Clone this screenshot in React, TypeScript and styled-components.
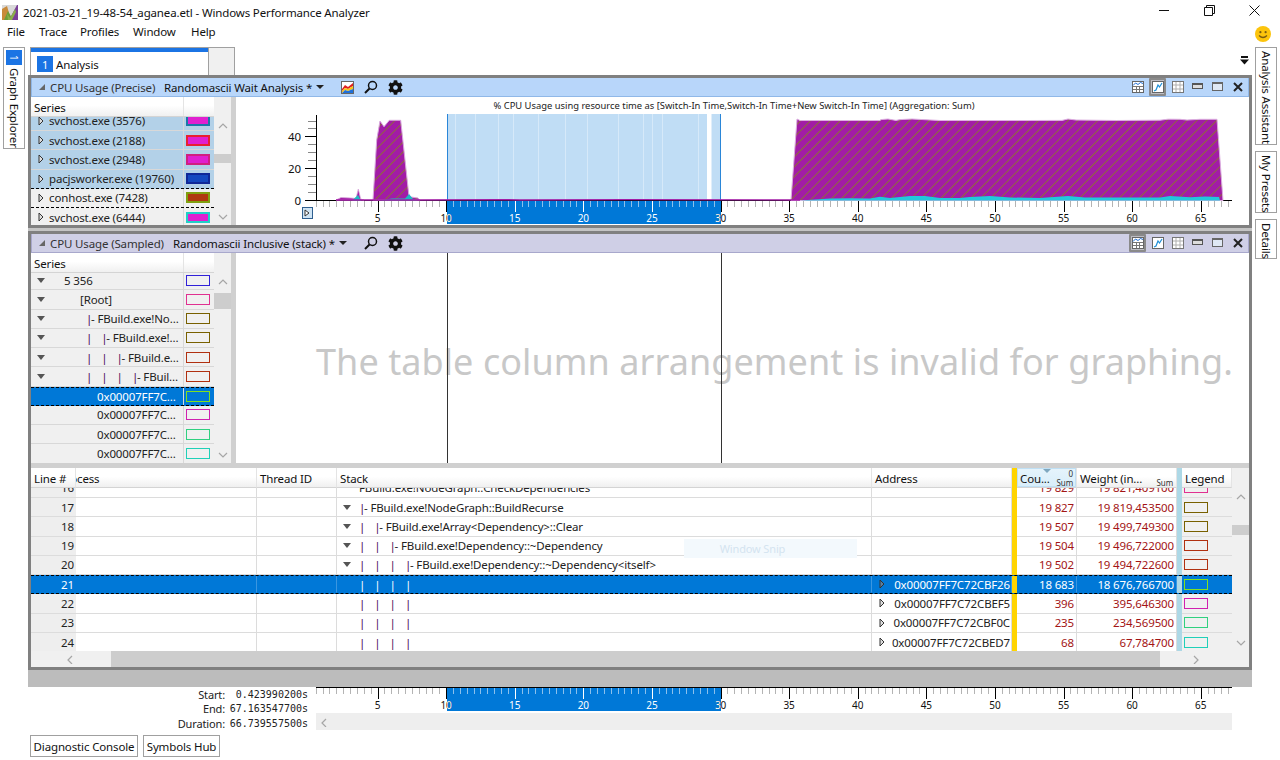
import React from 'react';
import styled, { createGlobalStyle } from 'styled-components';
import { FaCog } from 'react-icons/fa';

const FONT = `"Noto Sans", "Open Sans", "Liberation Sans", sans-serif`;

const Global = createGlobalStyle`
  html, body { margin: 0; padding: 0; background: #fff; }
  body { font-family: ${FONT}; font-size: 11.5px; letter-spacing: -0.14px; color: #111; }
  * { box-sizing: border-box; }
`;

const Page = styled.div`
  width: 1280px; height: 760px; overflow: hidden; display: flex; flex-direction: column; background: #fff;
`;
const TitleBar = styled.div`
  height: 24px; display: flex; align-items: center; padding-left: 2px; flex: none;
`;
const TitleText = styled.span`
  margin-left: 5px; white-space: nowrap;
`;
const WinControls = styled.div`
  margin-left: auto; display: flex; height: 100%; padding-right: 3px;
`;
const WinButton = styled.div`
  width: 45px; display: flex; align-items: center; justify-content: center; padding-bottom: 4px;
`;
const MenuBar = styled.div`
  height: 19px; display: flex; align-items: center; padding: 0 0 5px 7px; flex: none;
`;
const MenuItem = styled.span<{ $w: number }>`
  width: ${p => p.$w}px; flex: none;
`;
const Smiley = styled.svg`
  margin-left: auto; margin-right: 9px; margin-top: 5px; width: 16px; height: 16px;
`;
const Workspace = styled.div`
  flex: 1; display: flex; min-height: 0;
`;
const LeftRail = styled.div`
  width: 28px; flex: none; padding: 4px 0 0 3px;
`;
const RightRail = styled.div`
  width: 28px; flex: none; padding: 4px 0 0 3px; display: flex; flex-direction: column; gap: 6px;
`;
const SideTab = styled.div<{ $h: number }>`
  width: 22px; height: ${p => p.$h}px; border: 1px solid #a0a0a0; background: #fff; writing-mode: vertical-rl;
  display: flex; align-items: center; padding-top: 3px; white-space: nowrap; line-height: 20px;
`;
const GraphTab = styled(SideTab)`
  padding-top: 2px; gap: 3px;
`;
const TabBadge = styled.span`
  width: 16px; height: 16px; background: #1b74e4; color: #fff; font-size: 10px; display: flex; align-items: center; justify-content: center; line-height: 1;
`;
const Center = styled.div`
  width: 1224px; flex: none; display: flex; flex-direction: column;
`;
const TabStrip = styled.div`
  height: 32px; flex: none; display: flex; padding: 4px 0 0 2px; align-items: stretch;
`;
const Tab = styled.div`
  width: 179px; border: 1px solid #a0a0a0; border-bottom: none; background: #fff;
  display: flex; align-items: center; gap: 3px; padding: 5px 0 0 6px; box-shadow: inset 0 4px 0 #1b74e4;
`;
const TabNum = styled.span`
  width: 16px; height: 16px; background: #1b74e4; color: #fff; font-size: 11px; display: flex; align-items: center; justify-content: center;
`;
const TabFiller = styled.div`
  width: 26px; border: 1px solid #a0a0a0; border-left: none; border-bottom: none; background: #f0f0f0;
`;
const StripArrow = styled.svg`
  margin: 9px 3px 0 auto; width: 9px; height: 9px;
`;
const Frame = styled.div<{ $h: number }>`
  height: ${p => p.$h}px; flex: none; border: 3px solid #808080; display: flex; flex-direction: column; background: #fff;
`;
const FrameGap = styled.div`
  height: 3px; background: #c4c4c4; flex: none;
`;
const Header = styled.div<{ $bg: string; $line: string }>`
  height: 19px; flex: none; background: ${p => p.$bg}; border-bottom: 1px solid ${p => p.$line}; border-left: 1px solid ${p => p.$line};
  border-right: 1px solid ${p => p.$line}; display: flex; align-items: center; padding: 0 0 0 7px;
`;
const HeaderTitle = styled.span<{ $w: number }>`
  margin-left: 5px; width: ${p => p.$w}px; flex: none; color: #333; white-space: nowrap;
`;
const PresetName = styled.span<{ $w: number }>`
  width: ${p => p.$w}px; flex: none; white-space: nowrap; display: flex; align-items: center; gap: 4px;
`;
const Caret = styled.span`
  width: 0; height: 0; border-left: 4px solid transparent; border-right: 4px solid transparent; border-top: 4px solid #222; flex: none;
`;
const Collapse = styled.span`
  width: 0; height: 0; border-bottom: 6px solid #666; border-left: 6px solid transparent; flex: none;
`;
const IconSlot = styled.span<{ $w?: number }>`
  width: ${p => p.$w ?? 24}px; height: 18px; display: flex; align-items: center; justify-content: center; flex: none;
`;
const RightIcons = styled.div`
  margin-left: auto; display: flex; align-items: center;
`;
const ToolBtn = styled.span<{ $on?: boolean }>`
  width: 20px; height: 18px; display: flex; align-items: center; justify-content: center; position: relative;
  ${p => p.$on ? `&::before { content: ''; position: absolute; left: 1px; right: 2px; top: 0; bottom: 0; background: #bdbdc4; border: 2px solid #8a8a8a; border-radius: 1px; }` : ''}
  & > svg { position: relative; }
`;
const Body = styled.div`
  flex: 1; display: flex; min-height: 0;
`;
const GraphBody = styled.div`
  height: 210px; flex: none; display: flex;
`;
const SeriesPane = styled.div`
  width: 200px; flex: none; display: flex; background: #f0f0f0; overflow: hidden;
`;
const SeriesMain = styled.div`
  width: 183px; flex: none; display: flex; flex-direction: column; overflow: hidden;
`;
const ColHead = styled.div`
  height: 20px; flex: none; display: flex; background: linear-gradient(#fff, #fff 45%, #f0f0f0); border-bottom: 1px solid #d4d4d4; position: relative; z-index: 1;
`;
const SeriesHeadName = styled.div`
  width: 153px; padding: 2px 0 0 3px; border-right: 1px solid #e4e4e4; line-height: 18px;
`;
const SeriesList = styled.div<{ $offset: number }>`
  margin-top: ${p => p.$offset}px; display: flex; flex-direction: column;
`;
const SeriesRow = styled.div<{ $state?: 'plain' | 'soft' | 'sel'; $dash?: boolean }>`
  height: 19.27px; flex: none; display: flex; align-items: center; border-bottom: 1px ${p => p.$dash || p.$state === 'sel' ? 'dashed #000' : 'solid #d8d8d8'};
  background: ${p => p.$state === 'soft' ? '#b3d1e8' : p.$state === 'sel' ? '#0078d7' : '#f0f0f0'};
  color: ${p => p.$state === 'sel' ? '#fff' : '#222'};
  ${p => p.$state === 'sel' ? 'border-top:1px dashed #000;' : ''}
`;
const RowName = styled.div<{ $pad?: number }>`
  width: 153px; flex: none; height: 100%; display: flex; align-items: center; padding-left: ${p => p.$pad ?? 0}px; padding-right: 2px; border-right: 1px solid #d8d8d8; white-space: nowrap; overflow: hidden; min-width: 0;
`;
const Clip = styled.span`
  overflow: hidden; text-overflow: ellipsis; white-space: pre; min-width: 0; flex: 1;
`;
const Gap = styled.span<{ $w: number }>`
  width: ${p => p.$w}px; flex: none;
`;
const SwatchCell = styled.div`
  width: 30px; display: flex; align-items: center; padding-left: 2px; flex: none;
`;
const Swatch = styled.span<{ $c: string; $fill?: string }>`
  display: block; width: 24px; height: 11px; border: ${p => p.$fill ? 2 : 1}px solid ${p => p.$c}; background: ${p => p.$fill ?? 'transparent'};
`;
const Track = styled.div`
  width: 17px; flex: none; background: #f0f0f0; display: flex; flex-direction: column; align-items: center; padding: 24px 0 3px;
`;
const Thumb = styled.div<{ $top: number; $h: number }>`
  width: 100%; height: ${p => p.$h}px; background: #cdcdcd; margin-top: ${p => p.$top}px; flex: none;
`;
const ChevBottom = styled.span`
  margin-top: auto; display: flex;
`;
const PaneDivider = styled.div`
  width: 5px; flex: none; background: #d0d0d0;
`;
const GraphArea = styled.div`
  flex: 1; position: relative; min-width: 0; overflow: hidden;
`;
const ChartSvg = styled.svg`
  display: block;
`;
const VLine = styled.div<{ $x: number }>`
  position: absolute; top: 0; bottom: 0; left: ${p => p.$x}px; width: 1px; background: #333;
`;
const InvalidText = styled.div`
  height: 100%; padding: 87px 0 0 80px; font-size: 36px; color: #c8c8c8; white-space: nowrap; letter-spacing: 0.07px; line-height: 44px;
`;
const HDivider = styled.div`
  height: 5px; flex: none; background: #d0d0d0;
`;
const TableWrap = styled.div`
  flex: 1; display: flex; flex-direction: column; min-height: 0; position: relative;
`;
const TableTop = styled.div`
  flex: 1; display: flex; min-height: 0;
`;
const TableMain = styled.div`
  width: 1201px; flex: none; display: flex; flex-direction: column; overflow: hidden; position: relative;
`;
const GRID = '45px 181px 80px 535px 140px 5px 60px 100px 5px 50px';
const THead = styled.div`
  height: 20px; flex: none; display: grid; grid-template-columns: ${GRID}; position: relative; z-index: 2; background: #fff;
`;
const Th = styled.div<{ $active?: boolean }>`
  background: ${p => p.$active ? 'linear-gradient(#e6f4fc,#d8eefa)' : 'linear-gradient(#fff, #fff 45%, #f0f0f0)'}; border-bottom: 1px solid #d4d4d4; border-right: 1px solid #e4e4e4;
  padding: 2px 0 0 3px; line-height: 18px; overflow: hidden; white-space: nowrap; position: relative;
  ${p => p.$active ? 'box-shadow: inset 0 0 0 1px #bfe0f5;' : ''}
`;
const ThCut = styled.span`
  display: block; margin-left: -20px;
`;
const ThSmall = styled.span`
  position: absolute; right: 3px; bottom: 0; font-size: 8px; line-height: 9px; color: #333;
`;
const ThZero = styled.span`
  position: absolute; right: 3px; top: 1px; font-size: 8px; line-height: 9px; color: #333;
`;
const SortMark = styled.span`
  position: absolute; left: 26px; top: 1px; width: 0; height: 0; border-left: 4px solid transparent; border-right: 4px solid transparent; border-top: 4px solid #7fa8c0;
`;
const Bar = styled.div<{ $c: string }>`
  background: ${p => p.$c};
`;
const TBody = styled.div`
  margin-top: -9.25px; display: flex; flex-direction: column;
`;
const TRow = styled.div<{ $sel?: boolean }>`
  height: 19.27px; flex: none; display: grid; grid-template-columns: ${GRID};
  background: ${p => p.$sel ? '#0078d7' : '#fff'}; color: ${p => p.$sel ? '#fff' : '#222'};
  ${p => p.$sel ? 'border-top: 1px dashed #000; border-bottom: 1px dashed #000;' : ''}
`;
const Td = styled.div<{ $sel?: boolean }>`
  border-right: 1px solid ${p => p.$sel ? '#3a96e0' : '#dcdcdc'}; border-bottom: 1px solid ${p => p.$sel ? 'transparent' : '#dcdcdc'};
  display: flex; align-items: center; overflow: hidden; white-space: nowrap; min-width: 0;
`;
const LineTd = styled(Td)`
  justify-content: flex-end; padding-right: 2px; background: ${p => p.$sel ? '#0078d7' : '#eee'}; border-right: none;
`;
const StackTd = styled(Td)`
  padding-left: 6px;
`;
const AddrTd = styled(Td)`
  padding: 0 1px 0 7px; justify-content: space-between;
`;
const NumTd = styled(Td)<{ $sel?: boolean }>`
  justify-content: flex-end; padding-right: 2px; color: ${p => p.$sel ? '#fff' : '#a31515'};
`;
const LegendTd = styled(Td)`
  padding-left: 2px; background: ${p => p.$sel ? '#0078d7' : '#f0f0f0'}; border-right: none;
`;
const ExpandSlot = styled.span`
  width: 16px; flex: none; display: flex;
`;
const Down = styled.span`
  width: 0; height: 0; border-left: 4.5px solid transparent; border-right: 4.5px solid transparent; border-top: 5px solid #555; flex: none;
`;
const Pipe = styled.span<{ $w?: number; $sel?: boolean }>`
  display: inline-block; width: ${p => p.$w ?? 15.3}px; flex: none; color: ${p => p.$sel ? '#fff' : '#4a0a5a'};
`;
const HScroll = styled.div`
  height: 16px; flex: none; display: flex; background: #f0f0f0; align-items: center;
`;
const HArrowCell = styled.div<{ $w: number }>`
  width: ${p => p.$w}px; flex: none; display: flex; justify-content: center; align-items: center; height: 100%;
`;
const HThumb = styled.div`
  width: 1049px; height: 100%; background: #cdcdcd; flex: none;
`;
const Snip = styled.div`
  position: absolute; left: 653px; top: 71px; width: 173px; height: 19px; background: #f3f9fd; color: #d4e4f0; font-size: 11px; text-align: center; line-height: 19px; padding-right: 36px; z-index: 1;
`;
const Strip = styled.div`
  height: 17px; flex: none; background: #bcbcbc;
`;
const Timeline = styled.div`
  display: grid; grid-template-columns: 288px 916px; height: 46px; flex: none;
`;
const TimeLabels = styled.div`
  display: grid; grid-template-columns: 197px 83px; grid-auto-rows: 14.6px; align-items: center;
`;
const TimeKey = styled.span`
  text-align: right; font-size: 11px; color: #222;
`;
const TimeVal = styled.span`
  font-family: "DejaVu Sans Mono", monospace; font-size: 10px; color: #222; text-align: right; letter-spacing: 0;
`;
const RulerCol = styled.div`
  display: flex; flex-direction: column;
`;
const RulerScroll = styled.div`
  height: 17px; margin-top: 1px; background: #eee; display: flex; align-items: center; padding-left: 4px;
`;
const Footer = styled.div`
  display: flex; gap: 5px; padding: 2px 0 0 2px;
`;
const FootBtn = styled.div<{ $w: number }>`
  width: ${p => p.$w}px; height: 22px; border: 1px solid #a0a0a0; display: flex; align-items: center; justify-content: center; white-space: nowrap;
`;

/* ---------- icons ---------- */
const Hollow = ({ light }: { light?: boolean }) => (
  <svg width="6" height="10" viewBox="0 0 6 10"><path d="M1 1 L5 5 L1 9 Z" fill={light ? '#5a7fa0' : '#ddd'} stroke="#333" strokeWidth="1" /></svg>
);
const Chev = ({ d = 'up' }: { d?: 'up' | 'down' | 'left' | 'right' }) => {
  const p = { up: 'M1 6 L5 2 L9 6', down: 'M1 2 L5 6 L9 2', left: 'M6 1 L2 5 L6 9', right: 'M3 1 L7 5 L3 9' }[d];
  return <svg width="10" height="10" viewBox="0 0 10 8" style={{ display: 'block' }}><path d={p} fill="none" stroke="#a6a6a6" strokeWidth="1.2" /></svg>;
};
const Logo = () => (
  <svg width="16" height="15" viewBox="0 0 16 15">
    <rect width="16" height="15" fill="#d9d9d9" />
    <polygon points="0,15 0,4 5,1 9,15" fill="#c98a3a" />
    <polygon points="2,15 6,6 11,15" fill="#6f9d3a" />
    <polygon points="7,15 15,0 16,0 16,15" fill="#7a3f98" />
    <polygon points="5,9 8,13 13,4 14,7 10,15 6,15" fill="#8bb04a" />
  </svg>
);
const Magnifier = () => (
  <svg width="14" height="14" viewBox="0 0 14 14"><circle cx="8.5" cy="5.5" r="4" fill="none" stroke="#111" strokeWidth="1.5" /><path d="M5.5 8.5 L1 13" stroke="#111" strokeWidth="2" /></svg>
);
const ColorChart = () => (
  <svg width="13" height="13" viewBox="0 0 13 13">
    <rect x=".5" y=".5" width="12" height="12" fill="#fff" stroke="#666" />
    <path d="M1 8 L4 4 L7 6 L12 2 V5 L7 8 L4 7 L1 10 Z" fill="#e02020" />
    <path d="M1 10 L4 7 L7 8 L12 5 V8 L7 10 L4 9 L1 12 Z" fill="#f5c518" />
    <path d="M1 12 L4 9 L7 10 L12 8 V12 H1 Z" fill="#1f6fd8" />
  </svg>
);
const ComboIcon = () => (
  <svg width="12" height="12" viewBox="0 0 12 12"><rect x=".5" y=".5" width="11" height="11" fill="#fff" stroke="#666" /><path d="M1 5.5H11M1 8.5H11M4.5 5V11M7.5 5V11" stroke="#777" /><path d="M1 4.5 L3.5 2 L6 3.5 L8.5 1.5 L11 2.5" fill="none" stroke="#1f6fd8" /></svg>
);
const LineIcon = () => (
  <svg width="12" height="12" viewBox="0 0 12 12"><rect x=".5" y=".5" width="11" height="11" fill="#fff" stroke="#666" /><path d="M2 10 L4 9 L6 4 L7.5 6 L10 2" fill="none" stroke="#1f8fd8" strokeWidth="1.2" /></svg>
);
const TableIcon = () => (
  <svg width="12" height="12" viewBox="0 0 12 12"><rect x=".5" y=".5" width="11" height="11" fill="#fff" stroke="#777" /><path d="M1 4H11M1 8H11M4 1V11M8 1V11" stroke="#b0b0b0" /></svg>
);
const MinBtn = () => (
  <svg width="12" height="8" viewBox="0 0 12 8"><rect x=".5" y=".5" width="10" height="5" fill="#ddd" stroke="#555" /><rect x="0" y="0" width="11" height="2" fill="#555" /></svg>
);
const MaxBtn = () => (
  <svg width="12" height="10" viewBox="0 0 12 10"><rect x=".5" y=".5" width="10" height="8" fill="#dfe8f4" stroke="#666" /><rect x="0" y="0" width="11" height="2" fill="#666" /></svg>
);
const CloseBtn = () => (
  <svg width="10" height="10" viewBox="0 0 10 10"><path d="M1 1 L9 9 M9 1 L1 9" stroke="#222" strokeWidth="2" /></svg>
);
const RightTools = ({ active }: { active: number }) => (
  <RightIcons>
    <ToolBtn $on={active === 0}><ComboIcon /></ToolBtn>
    <ToolBtn $on={active === 1}><LineIcon /></ToolBtn>
    <ToolBtn $on={active === 2}><TableIcon /></ToolBtn>
    <ToolBtn><MinBtn /></ToolBtn>
    <ToolBtn><MaxBtn /></ToolBtn>
    <ToolBtn><CloseBtn /></ToolBtn>
  </RightIcons>
);

/* ---------- chart ---------- */
const X = (t: number) => 377.5 + (t - 5) * 13.72;

const Ruler = ({ top, id }: { top: number; id: string }) => {
  const sx0 = 447, sx1 = 721;
  const ticks: React.ReactNode[] = [];
  for (let i = 1; i <= 134; i++) {
    const t = i / 2;
    const x = Math.round(X(t)) + 0.5;
    if (i % 10 === 0) continue;
    const inside = x > sx0 && x < sx1;
    ticks.push(<line key={i} x1={x} x2={x} y1={top + 1} y2={top + 7} stroke={inside ? '#8cc0ec' : '#b4b4b4'} />);
  }
  const labels = [5, 10, 15, 20, 25, 30, 35, 40, 45, 50, 55, 60, 65];
  const white = labels.filter(l => l >= 10 && l <= 30);
  const black = labels.filter(l => l <= 10 || l >= 30);
  return (
    <g fontFamily={FONT} fontSize="10" textAnchor="middle">
      <clipPath id={id}><rect x={sx0} y={top} width={sx1 - sx0} height={24} /></clipPath>
      <rect x={sx0} y={top + 1} width={sx1 - sx0} height={23} fill="#0078d7" />
      <line x1={316} x2={1232} y1={top + 0.5} y2={top + 0.5} stroke="#000" />
      {ticks}
      {labels.map(l => {
        const x = Math.round(X(l)) + 0.5;
        const inside = l > 10 && l < 30;
        return <line key={l} x1={x} x2={x} y1={top + 1} y2={top + 12} stroke={inside ? '#fff' : '#000'} />;
      })}
      {black.map(l => <text key={l} x={X(l)} y={top + 22} fill="#111">{l}</text>)}
      <g clipPath={`url(#${id})`}>
        {white.map(l => <text key={l} x={X(l)} y={top + 22} fill="#fff">{l}</text>)}
      </g>
    </g>
  );
};

const bigTop = 'M791 200 L797 119 L800 120.5 L830 120.5 L880 120.5 L881 119.6 L888 119 L896 120.4 L900 119.6 L912 119 L925 119.7 L940 120.5 L1030 120.5 L1062 120.4 L1068 119 L1076 120 L1116 120.5 L1160 120.2 L1168 119.2 L1180 119.3 L1187 120 L1200 119.3 L1217 119.3 L1223 200.5 L791 200.5 Z';
const peak = 'M373 200 L376.7 140 L380 121 L384 126.7 L389.3 120.3 L400.7 120.3 L409 196.7 L418 198 L420 200 Z';
const smallHump = 'M336 200 L341 197.5 L351 198 L356 198.5 L358.3 189 L360.7 199 L364 200 Z';
const teal = 'M800 200.5 L830 198.6 L850 198.2 L870 198.6 L880 196.8 L890 198 L910 196 L925 196 L940 198 L960 198 L970 197 L990 196 L1010 197.5 L1040 198 L1068 196 L1085 197.5 L1115 197.5 L1135 197.5 L1160 197.5 L1170 196 L1190 197.2 L1205 196.4 L1219 197 L1220 200.5 Z';
const bands = [455, 475, 498, 513, 538, 565, 587, 618, 643, 652, 662, 698];

const PreciseChart = () => (
  <ChartSvg width="1013" height="127" viewBox="236 97 1013 127">
    <defs>
      <pattern id="hatch" width="7" height="7" patternUnits="userSpaceOnUse" patternTransform="rotate(45)">
        <rect width="7" height="7" fill="#a21ca6" />
        <line x1="0.5" x2="0.5" y1="0" y2="7" stroke="#8f6a3c" strokeWidth="1" />
      </pattern>
    </defs>
    <text x="734" y="108.5" fontFamily={FONT} fontSize="9.4" letterSpacing="0" textAnchor="middle" fill="#222">% CPU Usage using resource time as [Switch-In Time,Switch-In Time+New Switch-In Time] (Aggregation: Sum)</text>
    <rect x="447" y="114" width="274" height="86" fill="#c0ddf5" />
    {bands.map(b => <rect key={b} x={b} y="114" width="1" height="86" fill="#d6e9f9" />)}
    <rect x="707" y="114" width="4.5" height="86" fill="#fff" />
    <rect x="447" y="114" width="1" height="86" fill="#2a86d8" />
    <rect x="720" y="114" width="1" height="86" fill="#2a86d8" />
    <Ruler top={200} id="clip-a" />
    <path d={smallHump} fill="#a21ca6" stroke="#d8a8dc" strokeWidth="0.8" />
    <path d={peak} fill="url(#hatch)" stroke="#d8a8dc" strokeWidth="1" />
    <path d={bigTop} fill="url(#hatch)" stroke="#dcaee0" strokeWidth="1" />
    <path d="M380 200.5 L392 198.5 L405 198.5 L409 194 L413 199 L418 200.5 Z M352 200.5 L358 195 L361 200.5 Z" fill="#1fb8c4" />
    <path d={teal} fill="#22c8dc" />
    <path d="M336 200 L420 200 L500 199.6 L520 200 L630 199.6 L800 200" fill="none" stroke="#a21ca6" strokeWidth="1.4" />
    <line x1="316.5" x2="316.5" y1="115" y2="200" stroke="#000" />
    {[5, 10, 15, 25, 30, 35, 45, 50].map(v => <line key={v} x1="308" x2="316" y1={Math.round(200 - v * 1.59) + 0.5} y2={Math.round(200 - v * 1.59) + 0.5} stroke="#888" />)}
    {[20, 40].map(v => <line key={v} x1="305" x2="316" y1={Math.round(200 - v * 1.59) + 0.5} y2={Math.round(200 - v * 1.59) + 0.5} stroke="#000" />)}
    <line x1="305" x2="316" y1="200.5" y2="200.5" stroke="#000" />
    <g fontFamily={FONT} fontSize="11.5" textAnchor="end" fill="#111">
      <text x="301" y="141">40</text>
      <text x="301" y="173">20</text>
      <text x="301" y="205">0</text>
    </g>
    <g>
      <rect x="302.5" y="207.5" width="10" height="11" fill="#cfe4f4" stroke="#2f5f8f" />
      <path d="M305 210 L309 213 L305 216 Z" fill="#fff" stroke="#333" />
    </g>
  </ChartSvg>
);

const series1: { n: string; c: string; f: string; s?: 'soft'; d?: boolean }[] = [
  { n: 'svchost.exe (3576)', c: '#1a78a8', f: '#e020d0', s: 'soft' },
  { n: 'svchost.exe (2188)', c: '#e82030', f: '#e020d0', s: 'soft' },
  { n: 'svchost.exe (2948)', c: '#d02080', f: '#e020d0', s: 'soft' },
  { n: 'pacjsworker.exe (19760)', c: '#102898', f: '#1548c0', s: 'soft', d: true },
  { n: 'conhost.exe (7428)', c: '#80a010', f: '#b03810', d: true },
  { n: 'svchost.exe (6444)', c: '#20d0c8', f: '#e020d0' },
];

const series2: { pad: number; pipes: number; last: string; c: string; tri: boolean; sel?: boolean }[] = [
  { pad: 34, pipes: 0, last: '5 356', c: '#3020d8', tri: true },
  { pad: 50, pipes: 0, last: '[Root]', c: '#e03090', tri: true },
  { pad: 56, pipes: 0, last: '|- FBuild.exe!NodeGraph::BuildRecurse', c: '#786000', tri: true },
  { pad: 56, pipes: 1, last: '|- FBuild.exe!Array<Dependency>::Clear', c: '#786000', tri: true },
  { pad: 56, pipes: 2, last: '|- FBuild.exe!Dependency::~Dependency', c: '#b03010', tri: true },
  { pad: 56, pipes: 3, last: '|- FBuild.exe!Dependency::~Dependency<itself>', c: '#b03010', tri: true },
  { pad: 66, pipes: 0, last: '0x00007FF7C72CBF26', c: '#80e020', tri: false, sel: true },
  { pad: 66, pipes: 0, last: '0x00007FF7C72CBEF5', c: '#d020b0', tri: false },
  { pad: 66, pipes: 0, last: '0x00007FF7C72CBF0C', c: '#30d080', tri: false },
  { pad: 66, pipes: 0, last: '0x00007FF7C72CBED7', c: '#20d0b8', tri: false },
];

const rows: { l: number; pipes: number; text: string; tri: boolean; addr: string; cnt: string; w: string; c: string; sel?: boolean }[] = [
  { l: 16, pipes: 0, text: 'FBuild.exe!NodeGraph::CheckDependencies', tri: false, addr: '', cnt: '19 829', w: '19 821,409100', c: '#e03090' },
  { l: 17, pipes: 0, text: '|- FBuild.exe!NodeGraph::BuildRecurse', tri: true, addr: '', cnt: '19 827', w: '19 819,453500', c: '#786000' },
  { l: 18, pipes: 1, text: '|- FBuild.exe!Array<Dependency>::Clear', tri: true, addr: '', cnt: '19 507', w: '19 499,749300', c: '#786000' },
  { l: 19, pipes: 2, text: '|- FBuild.exe!Dependency::~Dependency', tri: true, addr: '', cnt: '19 504', w: '19 496,722000', c: '#b03010' },
  { l: 20, pipes: 3, text: '|- FBuild.exe!Dependency::~Dependency<itself>', tri: true, addr: '', cnt: '19 502', w: '19 494,722600', c: '#b03010' },
  { l: 21, pipes: 4, text: '', tri: false, addr: '0x00007FF7C72CBF26', cnt: '18 683', w: '18 676,766700', c: '#80e020', sel: true },
  { l: 22, pipes: 4, text: '', tri: false, addr: '0x00007FF7C72CBEF5', cnt: '396', w: '395,646300', c: '#d020b0' },
  { l: 23, pipes: 4, text: '', tri: false, addr: '0x00007FF7C72CBF0C', cnt: '235', w: '234,569500', c: '#30d080' },
  { l: 24, pipes: 4, text: '', tri: false, addr: '0x00007FF7C72CBED7', cnt: '68', w: '67,784700', c: '#20d0b8' },
];

const PipedText = ({ pipes, text, sel }: { pipes: number; text: string; sel?: boolean }) => {
  const match = text.startsWith('|-');
  return (
    <>
      {Array.from({ length: pipes }).map((_, i) => <Pipe key={i} $sel={sel}>|</Pipe>)}
      {match ? <><Pipe $w={5} $sel={sel}>|</Pipe>{text.slice(1)}</> : text}
    </>
  );
};

const SeriesScroll = ({ top, h }: { top: number; h: number }) => (
  <Track>
    <Chev d="up" />
    <Thumb $top={top} $h={h} />
    <ChevBottom><Chev d="down" /></ChevBottom>
  </Track>
);

export default function App() {
  return (
    <Page>
      <Global />
      <TitleBar>
        <Logo />
        <TitleText>2021-03-21_19-48-54_aganea.etl - Windows Performance Analyzer</TitleText>
        <WinControls>
          <WinButton><svg width="11" height="11" viewBox="0 0 11 11"><path d="M0 5.5H10" stroke="#111" /></svg></WinButton>
          <WinButton><svg width="11" height="11" viewBox="0 0 11 11"><path d="M2.5 2.5V.5H10.5V8.5H8.5M.5 2.5H8.5V10.5H.5Z" fill="none" stroke="#111" /></svg></WinButton>
          <WinButton><svg width="11" height="11" viewBox="0 0 11 11"><path d="M.5 .5L10.5 10.5M10.5 .5L.5 10.5" stroke="#111" /></svg></WinButton>
        </WinControls>
      </TitleBar>
      <MenuBar>
        <MenuItem $w={32}>File</MenuItem>
        <MenuItem $w={41}>Trace</MenuItem>
        <MenuItem $w={53}>Profiles</MenuItem>
        <MenuItem $w={58}>Window</MenuItem>
        <MenuItem $w={30}>Help</MenuItem>
        <Smiley viewBox="0 0 16 16">
          <circle cx="8" cy="8" r="8" fill="#fcc40c" />
          <circle cx="5.4" cy="6.2" r="1.1" fill="#7a5c10" /><circle cx="10.6" cy="6.2" r="1.1" fill="#7a5c10" />
          <path d="M4 9.5 Q8 13.5 12 9.5" fill="none" stroke="#7a5c10" strokeWidth="1.2" />
        </Smiley>
      </MenuBar>
      <Workspace>
        <LeftRail>
          <GraphTab $h={102}><TabBadge>1</TabBadge>Graph Explorer</GraphTab>
        </LeftRail>
        <Center>
          <TabStrip>
            <Tab><TabNum>1</TabNum>Analysis</Tab>
            <TabFiller />
            <StripArrow viewBox="0 0 9 9"><rect x="1" width="7" height="2" fill="#111" /><path d="M0 3.5H9L4.5 8.5Z" fill="#111" /></StripArrow>
          </TabStrip>
          <Frame $h={153}>
            <Header $bg="#b8d6fa" $line="#90b8e8">
              <Collapse />
              <HeaderTitle $w={114}>CPU Usage (Precise)</HeaderTitle>
              <PresetName $w={172}>Randomascii Wait Analysis *<Caret /></PresetName>
              <IconSlot $w={22}><ColorChart /></IconSlot>
              <IconSlot $w={26}><Magnifier /></IconSlot>
              <IconSlot $w={22}><FaCog size={15} color="#111" /></IconSlot>
              <RightTools active={1} />
            </Header>
            <Body>
              <SeriesPane>
                <SeriesMain>
                  <ColHead><SeriesHeadName>Series</SeriesHeadName></ColHead>
                  <SeriesList $offset={-5.3}>
                    {series1.map(s => (
                      <SeriesRow key={s.n} $state={s.s} $dash={s.d}>
                        <RowName $pad={7}>
                          <Hollow /><Gap $w={5} />
                          <Clip>{s.n}</Clip>
                        </RowName>
                        <SwatchCell><Swatch $c={s.c} $fill={s.f} /></SwatchCell>
                      </SeriesRow>
                    ))}
                  </SeriesList>
                </SeriesMain>
                <SeriesScroll top={23} h={9} />
              </SeriesPane>
              <PaneDivider />
              <GraphArea><PreciseChart /></GraphArea>
            </Body>
          </Frame>
          <FrameGap />
          <Frame $h={439}>
            <Header $bg="#cfcfe6" $line="#a8a8cc">
              <Collapse />
              <HeaderTitle $w={123}>CPU Usage (Sampled)</HeaderTitle>
              <PresetName $w={185}>Randomascii Inclusive (stack) *<Caret /></PresetName>
              <IconSlot $w={26}><Magnifier /></IconSlot>
              <IconSlot $w={22}><FaCog size={15} color="#111" /></IconSlot>
              <RightTools active={0} />
            </Header>
            <GraphBody>
              <SeriesPane>
                <SeriesMain>
                  <ColHead><SeriesHeadName>Series</SeriesHeadName></ColHead>
                  <SeriesList $offset={-2}>
                    {series2.map(s => (
                      <SeriesRow key={s.c + s.pad + s.last} $state={s.sel ? 'sel' : 'plain'}>
                        <RowName $pad={s.tri ? 6 : s.pad}>
                          {s.tri && <><Down /><Gap $w={s.pad - 15} /></>}
                          <Clip><PipedText pipes={s.pipes} text={s.last} /></Clip>
                        </RowName>
                        <SwatchCell><Swatch $c={s.c} /></SwatchCell>
                      </SeriesRow>
                    ))}
                  </SeriesList>
                </SeriesMain>
                <SeriesScroll top={6} h={16} />
              </SeriesPane>
              <PaneDivider />
              <GraphArea>
                <InvalidText>The table column arrangement is invalid for graphing.</InvalidText>
                <VLine $x={211} />
                <VLine $x={485} />
              </GraphArea>
            </GraphBody>
            <HDivider />
            <TableWrap>
              <TableTop>
                <TableMain>
                  <THead>
                    <Th>Line #</Th>
                    <Th><ThCut>Process</ThCut></Th>
                    <Th>Thread ID</Th>
                    <Th>Stack</Th>
                    <Th>Address</Th>
                    <Bar $c="#ffd400" />
                    <Th $active>Cou...<SortMark /><ThZero>0</ThZero><ThSmall>Sum</ThSmall></Th>
                    <Th>Weight (in...<ThSmall>Sum</ThSmall></Th>
                    <Bar $c="#add8e6" />
                    <Th>Legend</Th>
                  </THead>
                  <TBody>
                    {rows.map(r => (
                      <TRow key={r.l} $sel={r.sel}>
                        <LineTd $sel={r.sel}>{r.l}</LineTd>
                        <Td $sel={r.sel} />
                        <Td $sel={r.sel} />
                        <StackTd $sel={r.sel}>
                          <ExpandSlot>{r.tri && <Down />}</ExpandSlot>
                          <PipedText pipes={r.pipes} text={r.text} sel={r.sel} />
                        </StackTd>
                        <AddrTd $sel={r.sel}>
                          {r.addr && <><Hollow light={r.sel} />{r.addr}</>}
                        </AddrTd>
                        <Bar $c="#ffd400" />
                        <NumTd $sel={r.sel}>{r.cnt}</NumTd>
                        <NumTd $sel={r.sel}>{r.w}</NumTd>
                        <Bar $c="#add8e6" />
                        <LegendTd $sel={r.sel}><Swatch $c={r.c} /></LegendTd>
                      </TRow>
                    ))}
                  </TBody>
                  <Snip>Window Snip</Snip>
                </TableMain>
                <SeriesScroll top={23} h={10} />
              </TableTop>
              <HScroll>
                <HArrowCell $w={80}><Chev d="left" /></HArrowCell>
                <HThumb />
                <HArrowCell $w={72}><Chev d="right" /></HArrowCell>
              </HScroll>
            </TableWrap>
          </Frame>
          <Strip />
          <Timeline>
            <TimeLabels>
              <TimeKey>Start:</TimeKey><TimeVal>0.423990200s</TimeVal>
              <TimeKey>End:</TimeKey><TimeVal>67.163547700s</TimeVal>
              <TimeKey>Duration:</TimeKey><TimeVal>66.739557500s</TimeVal>
            </TimeLabels>
            <RulerCol>
              <ChartSvg width="916" height="25" viewBox="316 687 916 25"><Ruler top={687} id="clip-b" /></ChartSvg>
              <RulerScroll><Chev d="left" /></RulerScroll>
            </RulerCol>
          </Timeline>
          <Footer>
            <FootBtn $w={108}>Diagnostic Console</FootBtn>
            <FootBtn $w={77}>Symbols Hub</FootBtn>
          </Footer>
        </Center>
        <RightRail>
          <SideTab $h={98}>Analysis Assistant</SideTab>
          <SideTab $h={62}>My Presets</SideTab>
          <SideTab $h={40}>Details</SideTab>
        </RightRail>
      </Workspace>
    </Page>
  );
}
